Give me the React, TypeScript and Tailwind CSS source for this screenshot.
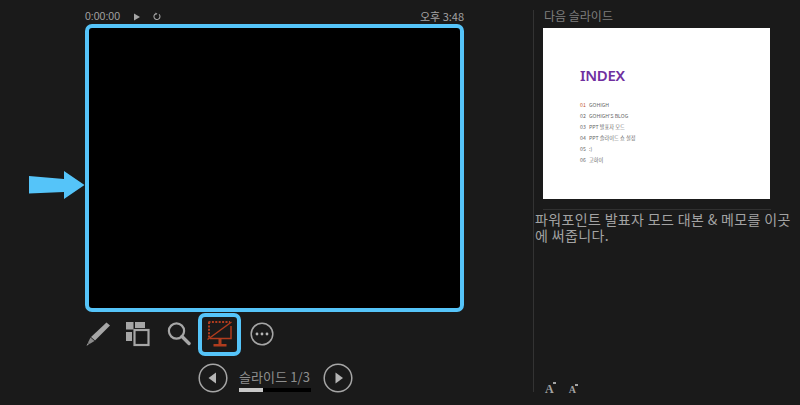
const FONT = "font-['Noto_Sans_CJK_KR','Noto_Sans',sans-serif]";

const INDEX_ITEMS = [
  ["01", "GOHIGH"],
  ["02", "GOHIGH'S BLOG"],
  ["03", "PPT 발표자 모드"],
  ["04", "PPT 슬라이드 쇼 설정"],
  ["05", ":)"],
  ["06", "고하이"],
];

function Pen() {
  return (
    <svg width="26" height="28" viewBox="0 0 26 28">
      <path d="M21.5 2.5 L25 5.5 L10 20.5 L6 17 Z" fill="#a6a6a6" />
      <path d="M5.5 17.5 L9.5 21 L4.5 24 L3 22.5 Z" fill="#8a8a8a" />
      <path d="M3 23 L4 24 L1.5 26 Z" fill="#c4c4c4" />
    </svg>
  );
}

function Thumbs() {
  return (
    <svg width="24" height="25" viewBox="0 0 24 25">
      <rect x="0" y="0" width="7.5" height="7.5" fill="#a6a6a6" />
      <rect x="9" y="0" width="10" height="6" fill="#a6a6a6" />
      <rect x="0" y="10" width="6" height="9" fill="#a6a6a6" />
      <rect x="8.5" y="8" width="14" height="15" fill="#1a1a1a" stroke="#a6a6a6" strokeWidth="2.2" />
    </svg>
  );
}

function Search() {
  return (
    <svg width="24" height="26" viewBox="0 0 24 26">
      <circle cx="9.5" cy="10" r="7.6" fill="none" stroke="#a6a6a6" strokeWidth="2.2" />
      <path d="M15 15.5 L22 22.5" stroke="#a6a6a6" strokeWidth="3.4" strokeLinecap="round" />
    </svg>
  );
}

function BlackScreen() {
  return (
    <svg width="26" height="28" viewBox="0 0 26 28">
      <path d="M1.5 2 H23" stroke="#b03c1e" strokeWidth="2" strokeDasharray="2 1.4" fill="none" />
      <path d="M2 2 V18" stroke="#b03c1e" strokeWidth="2" strokeDasharray="2 1.4" fill="none" />
      <path d="M24 6 V18.5 H3" stroke="#b03c1e" strokeWidth="1.5" fill="none" />
      <path d="M0.5 19.5 L24.5 2" stroke="#b03c1e" strokeWidth="1.5" />
      <path d="M11.5 19 H14.5 V24 H19.5 V26.5 H6.5 V24 H11.5 Z" fill="#b03c1e" />
    </svg>
  );
}

function More() {
  return (
    <svg width="24" height="24" viewBox="0 0 24 24">
      <circle cx="12" cy="12" r="10.8" fill="none" stroke="#a6a6a6" strokeWidth="1.5" />
      <circle cx="7" cy="12" r="1.4" fill="#b5b5b5" />
      <circle cx="12" cy="12" r="1.4" fill="#b5b5b5" />
      <circle cx="17" cy="12" r="1.4" fill="#b5b5b5" />
    </svg>
  );
}

function NavButton({ dir }: { dir: "prev" | "next" }) {
  return (
    <svg width="30" height="30" viewBox="0 0 30 30">
      <circle cx="15" cy="15" r="13.8" fill="none" stroke="#a6a6a6" strokeWidth="1.5" />
      <path d={dir === "prev" ? "M10.5 15 L18 9.5 V20.5 Z" : "M20 15 L12.5 9.5 V20.5 Z"} fill="#b5b5b5" />
    </svg>
  );
}

function FontSizeButton({ small }: { small?: boolean }) {
  return (
    <span className={`relative font-['Liberation_Serif',serif] font-bold leading-none text-[#a3a3a3] ${small ? "text-[10px]" : "text-[12px]"}`}>
      A
      <span className="absolute -right-[2px] -top-[1px] h-[2px] w-[3px] bg-[#a3a3a3]" />
    </span>
  );
}

export default function App() {
  return (
    <div className={`relative flex h-[405px] w-[800px] overflow-hidden bg-[#1a1a1a] ${FONT}`}>
      <div className="absolute left-[29px] top-[171px]">
        <svg width="56" height="29" viewBox="0 0 56 29">
          <path d="M0 5 L35 8 V0 L55.5 14 L35 28 V21 L0 22.5 Z" fill="#55c4f9" />
        </svg>
      </div>

      <div className="flex w-[533px] shrink-0 flex-col pl-[85px]">
        <div className="flex h-[24px] w-[379px] items-center pt-[9px] text-[11px] text-[#a3a3a3]">
          <span className="font-['Liberation_Sans',sans-serif] text-[10.5px]">0:00:00</span>
          <svg className="ml-[14px]" width="6" height="8" viewBox="0 0 6 8">
            <path d="M0 0.5 L6 4 L0 7.5 Z" fill="#a6a6a6" />
          </svg>
          <svg className="ml-[13px]" width="8" height="9" viewBox="0 0 9 9">
            <path d="M6.8 2 A3.4 3.4 0 1 1 3.2 1.3" fill="none" stroke="#a6a6a6" strokeWidth="1.2" />
            <path d="M2.8 0 V3 L5 1.4 Z" fill="#a6a6a6" />
          </svg>
          <span className="ml-auto">오후 3:48</span>
        </div>

        <div className="h-[288px] w-[379px] rounded-[7px] border-[4px] border-[#55c4f9] bg-black" />

        <div className="flex h-[44px] items-center">
          <div className="flex w-[26px] justify-center"><Pen /></div>
          <div className="ml-[15px] flex w-[24px] justify-center"><Thumbs /></div>
          <div className="ml-[17px] flex w-[24px] justify-center"><Search /></div>
          <div className="ml-[7px] flex h-[43px] w-[43px] items-center justify-center rounded-[7px] border-[4px] border-[#55c4f9]">
            <BlackScreen />
          </div>
          <div className="ml-[9px] flex w-[24px] justify-center"><More /></div>
        </div>

        <div className="ml-[113px] flex items-center pt-[7px]">
          <NavButton dir="prev" />
          <div className="ml-[11px] flex w-[72px] flex-col pt-[4px]">
            <span className="whitespace-nowrap text-[13px] leading-[18px] tracking-[0.1px] text-[#8f8f8f]">
              슬라이드 1/3
            </span>
            <div className="mt-[2px] h-[4px] w-[72px] bg-black">
              <div className="h-full w-[24px] bg-[#c8c8c8]" />
            </div>
          </div>
          <div className="ml-[12px]"><NavButton dir="next" /></div>
        </div>
      </div>

      <div className="mb-[13px] mt-[10px] flex w-[267px] flex-col border-l border-[#333333] pl-[1px]">
        <div className="pl-[9px] text-[12px] leading-[11px] text-[#7f7f7f]">다음 슬라이드</div>

        <div className="ml-[8px] mt-[7px] h-[171px] w-[227px] bg-white pl-[37px] pt-[38px]">
          <div className="font-['Noto_Sans',sans-serif] text-[15px] font-semibold leading-[18px] tracking-[-0.3px] text-[#7030a0]">
            INDEX
          </div>
          <div className="mt-[15px] flex flex-col">
            {INDEX_ITEMS.map(([num, label], i) => (
              <div key={num} className="flex h-[11px] items-center whitespace-nowrap text-[5.2px] text-[#666666]">
                <span className={`w-[9px] ${i === 0 ? "text-[#c0562b]" : ""}`}>{num}</span>
                <span>{label}</span>
              </div>
            ))}
          </div>
        </div>

        <div className="ml-[8px] mt-[10px] h-px w-[228px] bg-[#303030]" />

        <p className="mt-[1px] w-[262px] break-all text-[14px] leading-[16px] tracking-[0.35px] text-[#a3a3a3]">
          파워포인트 발표자 모드 대본 &amp; 메모를 이곳에 써줍니다.
        </p>

        <div className="-mb-[3px] mt-auto flex items-end gap-[15px] pl-[10px]">
          <FontSizeButton />
          <FontSizeButton small />
        </div>
      </div>
    </div>
  );
}
